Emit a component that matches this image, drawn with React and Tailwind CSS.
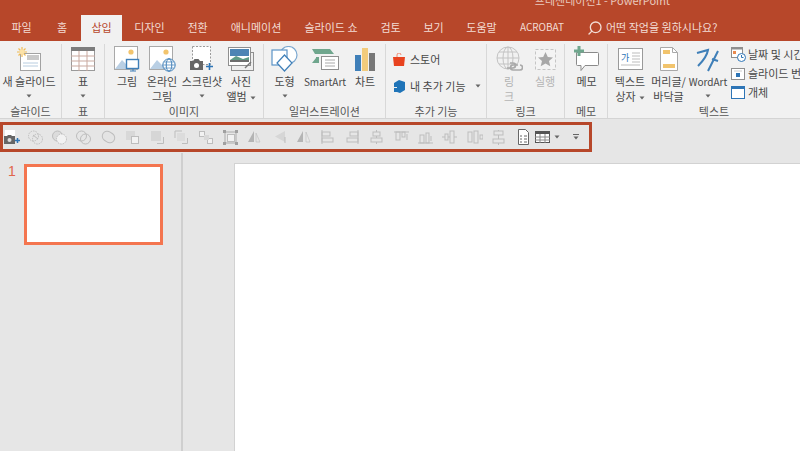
import { Search } from "lucide-react";

const tabs = [
  { name: "파일", w: "w-[43px]" },
  { name: "홈", w: "w-[38px]" },
  { name: "삽입", w: "w-[41px]", active: true },
  { name: "디자인", w: "w-[55px]" },
  { name: "전환", w: "w-[41px]" },
  { name: "애니메이션", w: "w-[76px]" },
  { name: "슬라이드 쇼", w: "w-[74px]" },
  { name: "검토", w: "w-[45px]" },
  { name: "보기", w: "w-[41px]" },
  { name: "도움말", w: "w-[55px]" },
  { name: "ACROBAT", w: "w-[66px]", small: true },
];

const Caret = () => (
  <svg width="6" height="4" viewBox="0 0 6 4" className="inline-block"><path d="M0.5 0.5h5L3 3.5z" fill="#666" /></svg>
);

// large ribbon button: icon, one or two text lines, optional caret line
const Big = ({ w, icon, lines, caret, inlineCaret, muted }) => (
  <div className={`${w} flex flex-col items-center shrink-0`}>
    <div className="h-[30px] flex items-center justify-center">{icon}</div>
    <div className={`text-[11px] leading-[15px] text-center whitespace-nowrap ${muted ? "text-[#b4b4b4]" : "text-[#484848]"}`}>
      {lines.map((l, i) => (
        <div key={i}>
          {l}
          {inlineCaret && i === lines.length - 1 && <span className="ml-[3px] align-middle inline-flex"><Caret /></span>}
        </div>
      ))}
      {caret && <div className="h-[13px] flex items-center justify-center"><Caret /></div>}
    </div>
  </div>
);

const Group = ({ w, label, children, last }) => (
  <div className={`${w} h-[75px] shrink-0 flex flex-col ${last ? "" : "border-r border-[#d8d8d8]"}`}>
    <div className="flex-1 flex overflow-hidden">{children}</div>
    <div className="h-[15px] text-[11px] leading-[15px] text-center text-[#555] whitespace-nowrap">{label}</div>
  </div>
);

const PicBase = () => (
  <>
    <rect x="0.5" y="0.5" width="23" height="23" fill="#fff" stroke="#a9a9a9" />
    <circle cx="17" cy="6" r="2.6" fill="#f2c46d" />
    <path d="M1 23l7-9 5 5 3-2 7 6z" fill="#b9cfe4" />
  </>
);

const NewSlideIcon = () => (
  <svg width="26" height="25" viewBox="0 0 26 25">
    <rect x="4.5" y="6.5" width="20" height="17" fill="#fff" stroke="#a2a2a2" />
    <rect x="11" y="8" width="12" height="5" fill="#c9c9c9" />
    <path d="M7 16h15M7 19h15" stroke="#b8cde0" />
    <g stroke="#f0bb55" strokeWidth="1.2"><path d="M6 0v10M1 5h10M2.5 1.5l7 7M9.5 1.5l-7 7" /></g>
    <circle cx="6" cy="5" r="2.4" fill="#fbe2a8" />
  </svg>
);

const TableIcon = () => (
  <svg width="24" height="24" viewBox="0 0 24 24">
    <rect x="0.5" y="0.5" width="23" height="23" fill="#fff" stroke="#9a9a9a" />
    <rect x="0" y="0" width="24" height="4" fill="#7c7c7c" />
    <path d="M8 4v20M16 4v20M0 9h24M0 14h24M0 19h24" stroke="#c9a99f" />
  </svg>
);

const PictureIcon = () => (
  <svg width="26" height="26" viewBox="0 0 26 26">
    <PicBase />
    <rect x="12.5" y="13.5" width="12" height="9" fill="#fff" stroke="#3f7fb8" strokeWidth="1.4" />
    <path d="M16 25h6M19 23v2" stroke="#3f7fb8" />
  </svg>
);

const OnlineIcon = () => (
  <svg width="27" height="26" viewBox="0 0 27 26">
    <PicBase />
    <circle cx="20" cy="19" r="6.2" fill="#fff" stroke="#3f7fb8" />
    <ellipse cx="20" cy="19" rx="2.8" ry="6.2" fill="none" stroke="#3f7fb8" />
    <path d="M14 19h12M15 16h10M15 22h10" stroke="#3f7fb8" strokeWidth="0.7" />
  </svg>
);

const ScreenshotIcon = () => (
  <svg width="24" height="26" viewBox="0 0 24 26">
    <rect x="2.5" y="0.5" width="18" height="18" fill="#fff" stroke="#9a9a9a" strokeDasharray="2 1.5" />
    <path d="M0 15h3l1.5-2h4L10 15h3v9H0z" fill="#666" />
    <circle cx="6.5" cy="19.5" r="2.5" fill="#fff" />
    <path d="M19.5 17v7M16 20.5h7" stroke="#2e75b6" strokeWidth="1.6" />
  </svg>
);

const AlbumIcon = () => (
  <svg width="26" height="25" viewBox="0 0 26 25">
    <rect x="3.5" y="5.5" width="22" height="18" fill="#eee" stroke="#8f8f8f" />
    <rect x="0.5" y="0.5" width="22" height="18" fill="#fff" stroke="#8f8f8f" />
    <rect x="2" y="2" width="19" height="7" fill="#4d84b4" />
    <path d="M2 13l6-4 7 3 6-2v3H2z" fill="#5f9b86" />
    <rect x="2" y="13" width="19" height="2" fill="#6d6d6d" />
    <path d="M17 21l6-6" stroke="#777" strokeWidth="1.4" />
  </svg>
);

const ShapesIcon = () => (
  <svg width="27" height="27" viewBox="0 0 27 27">
    <circle cx="17.5" cy="9" r="8.5" fill="#fff" stroke="#7ba8d0" strokeWidth="1.2" />
    <rect x="1" y="4" width="15" height="15" fill="#fff" stroke="#5b93c6" strokeWidth="1.2" />
    <path d="M13.5 9l7.5 8-7.5 8L6 17z" fill="#fff" stroke="#3f7fb8" strokeWidth="1.2" />
  </svg>
);

const SmartArtIcon = () => (
  <svg width="27" height="21" viewBox="0 0 27 21">
    <path d="M0 0h18l4 5H3zM0 14l4-5v-1h3v6z" fill="#6fa68d" />
    <rect x="9.5" y="7.5" width="17" height="13" fill="#fff" stroke="#8f8f8f" />
    <path d="M13 11h10M13 14h10M13 17h10" stroke="#aaa" />
  </svg>
);

const ChartIcon = () => (
  <svg width="20" height="23" viewBox="0 0 20 23">
    <rect x="0" y="7" width="6" height="16" fill="#3f7fb8" />
    <rect x="7" y="0" width="6" height="23" fill="#f2cb7c" />
    <rect x="14" y="5" width="6" height="18" fill="#777" />
  </svg>
);

const StoreIcon = () => (
  <svg width="13" height="13" viewBox="0 0 13 13">
    <path d="M0 4h12l-1 9H1z" fill="#e8431f" />
    <path d="M4 4V2a2 2 0 0 1 4 0" fill="none" stroke="#f08a70" />
  </svg>
);

const AddinIcon = () => (
  <svg width="13" height="13" viewBox="0 0 13 13">
    <path d="M6 0l6 2v8l-5 3-3-1V7H1V3z" fill="#1f74b8" />
    <rect x="1" y="8" width="4" height="4" fill="#1f74b8" />
  </svg>
);

const LinkIcon = () => (
  <svg width="27" height="27" viewBox="0 0 27 27" fill="none" stroke="#c3c3c3">
    <circle cx="12" cy="12" r="11" />
    <ellipse cx="12" cy="12" rx="5" ry="11" />
    <path d="M1 12h22M3 6h18M3 18h18M12 1v22" />
    <path d="M11 22h6a2.5 2.5 0 0 0 0-5h-3M22 19h-5a2.5 2.5 0 0 0 0 5h7a2.5 2.5 0 0 0 0-5" stroke="#a9a9a9" strokeWidth="1.6" />
  </svg>
);

const ActionIcon = () => (
  <svg width="23" height="23" viewBox="0 0 23 23">
    <rect x="1.5" y="1.5" width="20" height="20" fill="#f4f4f4" stroke="#c5c5c5" strokeDasharray="3 2" />
    <path d="M11.5 4l2.3 5 5.2.5-4 3.5 1.3 5.2-4.8-2.8-4.8 2.8 1.3-5.2-4-3.5 5.2-.5z" fill="#a8a8a8" />
  </svg>
);

const CommentIcon = () => (
  <svg width="26" height="26" viewBox="0 0 26 26">
    <path d="M2.5 6.5h21a1 1 0 0 1 1 1v11a1 1 0 0 1-1 1H11l-4 5v-5H3.5a1 1 0 0 1-1-1z" fill="#fff" stroke="#8a8a8a" />
    <path d="M5 0v10M0 5h10" stroke="#6fa68d" strokeWidth="3" />
  </svg>
);

const TextBoxIcon = () => (
  <svg width="25" height="22" viewBox="0 0 25 22">
    <rect x="0.5" y="0.5" width="24" height="21" fill="#fff" stroke="#9a9a9a" />
    <text x="3" y="13" fontSize="9" fill="#2e75b6" fontFamily="Noto Sans CJK KR">가</text>
    <path d="M14 5h8M14 8h8M14 11h8M14 14h8M3 17h19" stroke="#bdbdbd" />
  </svg>
);

const HeaderIcon = () => (
  <svg width="18" height="24" viewBox="0 0 18 24">
    <path d="M0.5 0.5h12l5 5v18H0.5z" fill="#fff" stroke="#a9a9a9" />
    <path d="M12.5 0.5v5h5" fill="none" stroke="#a9a9a9" />
    <rect x="3" y="3" width="7" height="4" fill="#f2c46d" />
    <rect x="3" y="17" width="12" height="4" fill="#f2c46d" />
  </svg>
);

const WordArtIcon = () => (
  <svg width="24" height="25" viewBox="0 0 24 25" fill="none" stroke="#3f7fb8" strokeWidth="2">
    <path d="M1 6l11-3C11 9 7 14 2 19" />
    <path d="M22 4L12 24M16 12l6 2" />
  </svg>
);

const DateIcon = () => (
  <svg width="15" height="15" viewBox="0 0 15 15">
    <rect x="0.5" y="0.5" width="11" height="10" fill="#fff" stroke="#8f8f8f" />
    <rect x="0" y="0" width="12" height="2.5" fill="#8f8f8f" />
    <rect x="2" y="4" width="3" height="3" fill="#ea8a4f" />
    <circle cx="10.5" cy="10.5" r="4" fill="#fff" stroke="#2e75b6" />
    <path d="M10.5 8v2.5h2" stroke="#2e75b6" fill="none" />
  </svg>
);

const SlideNoIcon = () => (
  <svg width="14" height="12" viewBox="0 0 14 12">
    <rect x="0.5" y="0.5" width="13" height="11" fill="#fff" stroke="#8f8f8f" />
    <rect x="5" y="5" width="4" height="4" fill="#2e75b6" />
    <path d="M3 3h8" stroke="#ccc" />
  </svg>
);

const ObjectIcon = () => (
  <svg width="14" height="13" viewBox="0 0 14 13">
    <rect x="0.5" y="0.5" width="13" height="12" fill="#fff" stroke="#2e75b6" />
    <rect x="0" y="0" width="14" height="3" fill="#2e75b6" />
  </svg>
);

const g = "#bdbdbd";

// quick-access toolbar glyphs, all greyed out
const qat = [
  <g fill="none" stroke={g}><circle cx="6.5" cy="7" r="5" strokeDasharray="1.5 1" /><circle cx="10.5" cy="10" r="5" strokeDasharray="1.5 1" /><path d="M6 6l5 4" /></g>,
  <g stroke={g}><circle cx="6.5" cy="7" r="5" fill="#dcdcdc" /><circle cx="10.5" cy="10" r="5" fill="#f2f2f2" strokeDasharray="1.5 1" /></g>,
  <g fill="none" stroke={g}><circle cx="6.5" cy="7" r="5" /><circle cx="10.5" cy="10" r="5" /></g>,
  <g fill="#e4e4e4" stroke={g}><rect x="2" y="3" width="13" height="10" rx="5" transform="rotate(35 8.5 8)" /></g>,
  <g><rect x="2" y="2" width="9" height="9" fill="#d8d8d8" /><rect x="7.5" y="7.5" width="7" height="7" fill="#f2f2f2" stroke={g} /></g>,
  <g><rect x="2" y="2" width="10" height="10" fill="#d6d6d6" /><path d="M14.5 8v6.5H8" fill="none" stroke={g} /></g>,
  <g><path d="M2 9V2h7" fill="none" stroke={g} /><rect x="4" y="4" width="8" height="8" fill="#dcdcdc" /><path d="M14.5 9v5.5H9" fill="none" stroke={g} /></g>,
  <g stroke={g}><rect x="2.5" y="2.5" width="5" height="5" fill="#f2f2f2" /><rect x="10.5" y="9.5" width="5" height="5" fill="#f2f2f2" /><rect x="7" y="6" width="5" height="5" fill="#d8d8d8" stroke="none" /></g>,
  <g fill="none" stroke="#ababab"><rect x="3" y="3" width="11" height="11" /><g fill="#a0a0a0" stroke="none"><rect x="1" y="1" width="3" height="3" /><rect x="13" y="1" width="3" height="3" /><rect x="1" y="13" width="3" height="3" /><rect x="13" y="13" width="3" height="3" /></g><rect x="5.5" y="5.5" width="7" height="7" fill="#f2f2f2" stroke={g} /></g>,
  <g><path d="M8 2L2 13h6z" fill="#b4b4b4" /><path d="M10 4l4 9h-4z" fill="#e4e4e4" stroke={g} strokeWidth="0.6" /></g>,
  <g><path d="M14 2L4 7.5 14 13z" fill="#d6d6d6" /><path d="M14 8v6" stroke={g} /></g>,
  <g><path d="M8 2L2 13h6z" fill="#b4b4b4" /><path d="M11 3l4 10h-4z" fill="#e8e8e8" stroke={g} strokeWidth="0.6" /></g>,
  <g fill="none" stroke={g}><path d="M3 1v14" /><rect x="3" y="3" width="8" height="4" /><rect x="3" y="9" width="11" height="4" /></g>,
  <g fill="none" stroke={g}><path d="M14 1v14" /><rect x="6" y="3" width="8" height="4" /><rect x="3" y="9" width="11" height="4" /></g>,
  <g fill="none" stroke={g}><path d="M8.5 1v14" /><rect x="5" y="3" width="7" height="4" fill="#e6e6e6" /><rect x="3" y="9" width="11" height="4" fill="#e6e6e6" /></g>,
  <g fill="none" stroke={g}><path d="M1 3h15" /><rect x="3" y="3" width="4" height="8" /><rect x="9" y="3" width="3" height="5" /><path d="M14 5v6" /></g>,
  <g fill="none" stroke={g}><path d="M1 14h15" /><rect x="3" y="6" width="4" height="8" /><rect x="9" y="4" width="3" height="10" /><path d="M14 7v5" /></g>,
  <g fill="none" stroke={g}><path d="M1 8h15" /><rect x="4" y="5" width="3" height="6" fill="#e6e6e6" /><rect x="9" y="2" width="4" height="12" fill="#e6e6e6" /></g>,
  <g fill="none" stroke={g}><rect x="2" y="3" width="4" height="10" /><rect x="8" y="2" width="4" height="12" /><rect x="14" y="6" width="3" height="4" /></g>,
  <g fill="none" stroke={g}><path d="M8.5 1v15" /><rect x="4" y="2" width="9" height="4" fill="#e6e6e6" /><rect x="3" y="10" width="11" height="4" fill="#e6e6e6" /></g>,
];

const QatCamera = () => (
  <svg width="17" height="14" viewBox="0 0 17 14">
    <rect x="1" y="0" width="10" height="8" fill="#fff" />
    <path d="M0 6h3l1-1h3l1 1h3v8H0z" fill="#666" />
    <circle cx="5.5" cy="10" r="2" fill="#ddd" />
    <path d="M13.5 8v5M11 10.5h5" stroke="#2e75b6" strokeWidth="1.5" />
  </svg>
);

const QatDoc = () => (
  <svg width="17" height="16" viewBox="0 0 17 16">
    <path d="M3.5 0.5h7l3 3v12h-10z" fill="#fff" stroke="#666" />
    <path d="M5 7h2M9 7h3M5 10h2M9 10h3M5 13h2M9 13h3" stroke="#666" />
  </svg>
);

const QatGrid = () => (
  <svg width="15" height="12" viewBox="0 0 15 12">
    <rect x="0.5" y="0.5" width="14" height="11" fill="#fff" stroke="#555" />
    <rect x="0" y="0" width="15" height="3" fill="#555" />
    <path d="M5 3v9M10 3v9M0 6h15M0 9h15" stroke="#888" />
  </svg>
);

export default function App() {
  return (
    <div className="w-[800px] h-[451px] overflow-hidden flex flex-col bg-[#e6e6e6] font-['Noto_Sans_CJK_KR','Liberation_Sans',sans-serif]">
      {/* title bar */}
      <div className="h-[15px] bg-[#b7472a] overflow-hidden flex justify-end pr-[130px]">
        <span className="-mt-[8px] text-[11px] leading-[16px] text-[#e9c9bd] whitespace-nowrap">프레젠테이션1 - PowerPoint</span>
      </div>

      {/* tabs */}
      <div className="h-[26px] bg-[#b7472a] flex items-stretch text-[11px] leading-[24px] text-[#f3dcd4]">
        {tabs.map((t) => (
          <div
            key={t.name}
            className={`${t.w} flex items-start justify-center whitespace-nowrap ${t.active ? "bg-[#f1f1f1] text-[#b7472a]" : ""} ${t.small ? "text-[10px]" : ""}`}
          >
            {t.name}
          </div>
        ))}
        <div className="ml-[12px] flex items-center gap-[3px]">
          <Search size={16} className="text-[#f3dcd4] -scale-x-100" />
          <span className="whitespace-nowrap -mt-[2px]">어떤 작업을 원하시나요?</span>
        </div>
      </div>

      {/* ribbon */}
      <div className="h-[78px] bg-[#f1f1f1] border-b border-[#d4d4d4] pt-[3px] flex items-start overflow-hidden">
        <Group w="w-[62px]" label="슬라이드">
          <Big w="w-[58px]" icon={<NewSlideIcon />} lines={["새 슬라이드"]} caret />
        </Group>
        <Group w="w-[43px]" label="표">
          <Big w="w-[42px]" icon={<TableIcon />} lines={["표"]} caret />
        </Group>
        <Group w="w-[159px]" label="이미지">
          <div className="flex pl-[5px]">
            <Big w="w-[34px]" icon={<PictureIcon />} lines={["그림"]} />
            <Big w="w-[36px]" icon={<OnlineIcon />} lines={["온라인", "그림"]} />
            <Big w="w-[44px]" icon={<ScreenshotIcon />} lines={["스크린샷"]} caret />
            <Big w="w-[34px]" icon={<AlbumIcon />} lines={["사진", "앨범"]} inlineCaret />
          </div>
        </Group>
        <Group w="w-[122px]" label="일러스트레이션">
          <div className="flex pl-[4px]">
            <Big w="w-[33px]" icon={<ShapesIcon />} lines={["도형"]} caret />
            <Big w="w-[48px]" icon={<SmartArtIcon />} lines={[<span className="text-[10px]">SmartArt</span>]} />
            <Big w="w-[32px]" icon={<ChartIcon />} lines={["차트"]} />
          </div>
        </Group>
        <Group w="w-[101px]" label="추가 기능">
          <div className="flex flex-col pl-[7px] pt-[6px] gap-[9px] text-[11px] text-[#484848]">
            <div className="h-[18px] flex items-center gap-[4px]"><StoreIcon />스토어</div>
            <div className="h-[18px] flex items-center gap-[4px] whitespace-nowrap"><AddinIcon />내 추가 기능<span className="ml-[5px] inline-flex"><Caret /></span></div>
          </div>
        </Group>
        <Group w="w-[78px]" label="링크">
          <div className="flex pl-[2px]">
            <Big w="w-[40px]" icon={<LinkIcon />} lines={["링", "크"]} muted />
            <Big w="w-[32px]" icon={<ActionIcon />} lines={["실행"]} muted />
          </div>
        </Group>
        <Group w="w-[43px]" label="메모">
          <Big w="w-[43px]" icon={<CommentIcon />} lines={["메모"]} />
        </Group>
        <Group w="w-[212px]" label="텍스트" last>
          <div className="flex pl-[2px]">
            <Big w="w-[40px]" icon={<TextBoxIcon />} lines={["텍스트", "상자"]} inlineCaret />
            <Big w="w-[37px]" icon={<HeaderIcon />} lines={["머리글/", "바닥글"]} />
            <Big w="w-[42px]" icon={<WordArtIcon />} lines={[<span className="text-[10px]">WordArt</span>]} caret />
            <div className="flex flex-col text-[11px] text-[#484848] whitespace-nowrap pl-[2px] pt-[1px]">
              <div className="h-[19px] flex items-center gap-[2px]"><DateIcon />날짜 및 시간</div>
              <div className="h-[19px] flex items-center gap-[3px]"><SlideNoIcon />슬라이드 번호</div>
              <div className="h-[19px] flex items-center gap-[3px]"><ObjectIcon />개체</div>
            </div>
          </div>
        </Group>
      </div>

      {/* customised toolbar, outlined in red */}
      <div className="mt-[3px] w-[592px] h-[30px] shrink-0 border-[3px] border-[#b7472a] flex items-center">
        <div className="w-[20px] pl-[1px] flex justify-start shrink-0"><QatCamera /></div>
        {qat.map((icon, i) => (
          <div key={i} className="w-[24.4px] shrink-0 flex justify-center">
            <svg width="17" height="16" viewBox="0 0 17 16">{icon}</svg>
          </div>
        ))}
        <div className="w-[24.4px] shrink-0 flex justify-center"><QatDoc /></div>
        <div className="flex items-center gap-[4px] shrink-0"><QatGrid /><Caret /></div>
        <div className="ml-[13px] flex flex-col items-center gap-[1px] shrink-0">
          <div className="w-[6px] h-[1px] bg-[#666]" />
          <Caret />
        </div>
      </div>

      {/* panes */}
      <div className="mt-[1px] flex-1 flex min-h-0">
        <div className="w-[183px] shrink-0 border-r-2 border-[#cfcfcf] pt-[11px] flex items-start">
          <span className="w-[24px] pl-[8px] -mt-[1px] font-['Liberation_Sans',sans-serif] text-[14px] leading-[16px] text-[#e0654c]">1</span>
          <div className="w-[139px] h-[81px] bg-white border-[3px] border-[#f4754f]" />
        </div>
        <div className="flex-1 pt-[10px] pl-[51px]">
          <div className="h-full bg-white border-l border-t border-[#d2d2d2]" />
        </div>
      </div>
    </div>
  );
}
